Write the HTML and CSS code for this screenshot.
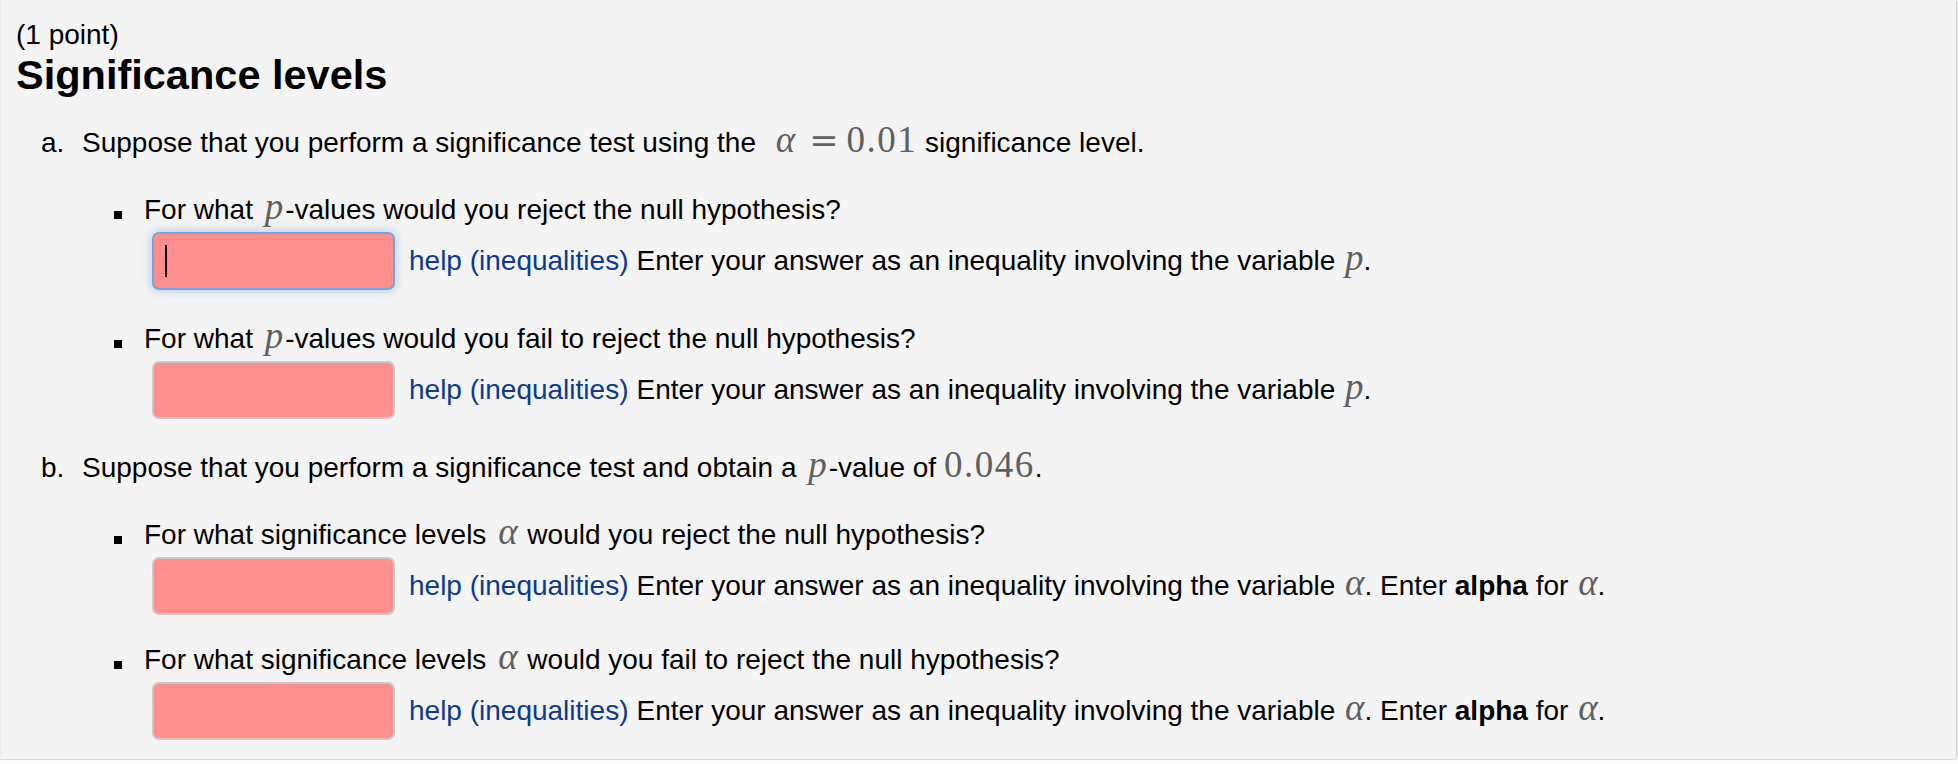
FILE: index.html
```html
<!DOCTYPE html>
<html lang="en">
<head>
<meta charset="utf-8">
<title>Significance levels</title>
<link rel="stylesheet" href="styles.css">
</head>
<body>
<div class="panel">
  <div class="points">(1 point)</div>
  <h1 class="title">Significance levels</h1>
  <ol class="parts">
    <li class="part part-a">
      <span class="part-label">a.</span>
      <div class="part-body">
        <p class="lead">Suppose that you perform a significance test using the <span class="math lead-math"><span class="mi alpha">α</span><span class="mo">=</span><span class="mn">0.01</span></span> significance level.</p>
        <ul class="qs">
          <li class="q q-first">
            <div class="q-text"><span class="bullet"></span>For what <span class="math"><span class="mi">p</span></span>-values would you reject the null hypothesis?</div>
            <div class="ans"><span class="input focused"><span class="caret"></span></span><a class="help">help (inequalities)</a><span class="hint">Enter your answer as an inequality involving the variable <span class="math"><span class="mi">p</span></span>.</span></div>
          </li>
          <li class="q">
            <div class="q-text"><span class="bullet"></span>For what <span class="math"><span class="mi">p</span></span>-values would you fail to reject the null hypothesis?</div>
            <div class="ans"><span class="input"></span><a class="help">help (inequalities)</a><span class="hint">Enter your answer as an inequality involving the variable <span class="math"><span class="mi">p</span></span>.</span></div>
          </li>
        </ul>
      </div>
    </li>
    <li class="part part-b">
      <span class="part-label">b.</span>
      <div class="part-body">
        <p class="lead">Suppose that you perform a significance test and obtain a <span class="math"><span class="mi">p</span></span>-value of <span class="math"><span class="mn">0.046</span></span>.</p>
        <ul class="qs">
          <li class="q q-first">
            <div class="q-text"><span class="bullet"></span>For what significance levels <span class="math"><span class="mi alpha">α</span></span> would you reject the null hypothesis?</div>
            <div class="ans"><span class="input"></span><a class="help">help (inequalities)</a><span class="hint">Enter your answer as an inequality involving the variable <span class="math"><span class="mi alpha">α</span></span>. Enter <b>alpha</b> for <span class="math"><span class="mi alpha">α</span></span>.</span></div>
          </li>
          <li class="q">
            <div class="q-text"><span class="bullet"></span>For what significance levels <span class="math"><span class="mi alpha">α</span></span> would you fail to reject the null hypothesis?</div>
            <div class="ans"><span class="input"></span><a class="help">help (inequalities)</a><span class="hint">Enter your answer as an inequality involving the variable <span class="math"><span class="mi alpha">α</span></span>. Enter <b>alpha</b> for <span class="math"><span class="mi alpha">α</span></span>.</span></div>
          </li>
        </ul>
      </div>
    </li>
  </ol>
</div>
</body>
</html>
```
FILE: styles.css
```css
html, body {
  margin: 0;
  padding: 0;
  background: #fbfbfb;
}

body {
  font-family: "Liberation Sans", Arial, Helvetica, sans-serif;
  font-size: 28px;
  line-height: 32px;
  color: #000;
}

.panel {
  box-sizing: border-box;
  width: 1957px;
  height: 760px;
  background: #f4f4f4;
  border-right: 1px solid #d6d6d6;
  border-bottom: 1px solid #d6d6d6;
  border-left: 1px solid #ececec;
  border-radius: 0 0 5px 0;
  box-shadow: 1px 1px 1px #e6e6e6;
  padding: 19px 0 0 15px;
}

.points {
  line-height: 32px;
}

.title {
  margin: 0;
  font-size: 41.5px;
  line-height: 48px;
  font-weight: bold;
}

.parts {
  list-style: none;
  margin: 28px 0 0 0;
  padding: 0;
}

.part {
  display: flex;
  padding-left: 25px;
}

.part-b {
  margin-top: 33px;
}

.part-label {
  width: 41px;
  flex: none;
}

.part-body {
  flex: 1;
}

.lead {
  margin: 0;
}

.qs {
  list-style: none;
  margin: 0;
  padding: 0 0 0 32px;
}

.q {
  margin-top: 33px;
}

.part-b .q {
  margin-top: 29px;
}

.q.q-first {
  margin-top: 35px;
}

.q-text {
  position: relative;
  padding-left: 30px;
}

.bullet {
  position: absolute;
  left: 0;
  top: 17px;
  width: 8px;
  height: 8px;
  background: #000;
}

.ans {
  display: flex;
  align-items: center;
  margin: 6px 0 0 38px;
}

.input {
  box-sizing: border-box;
  width: 243px;
  height: 58px;
  flex: none;
  background: #ff8f8f;
  border: 2px solid #c9c9c9;
  border-radius: 7px;
  display: flex;
  align-items: center;
  padding-left: 11px;
}

.input.focused {
  border-color: #72a6dd;
  box-shadow: 0 0 8px 2px rgba(120, 170, 225, 0.45);
}

.caret {
  display: block;
  width: 2px;
  height: 32px;
  background: #000;
}

.help {
  color: #0b3a8e;
  margin-left: 14px;
  margin-right: 8px;
  text-decoration: none;
}

.math {
  font-family: "Liberation Serif", "DejaVu Serif", "Times New Roman", serif;
  color: #606060;
  font-size: 37px;
  line-height: 0;
}

.mi {
  font-style: italic;
  margin: 0 2px 0 4px;
}

.hint .mi {
  margin: 0 0 0 2px;
}

.lead-math {
  margin-left: 8px;
}

.mn {
  letter-spacing: 1.5px;
}

.mo {
  font-family: "DejaVu Serif", "Liberation Serif", serif;
  font-size: 35px;
  margin: 0 8px 0 12px;
}

b {
  font-weight: bold;
}
```
